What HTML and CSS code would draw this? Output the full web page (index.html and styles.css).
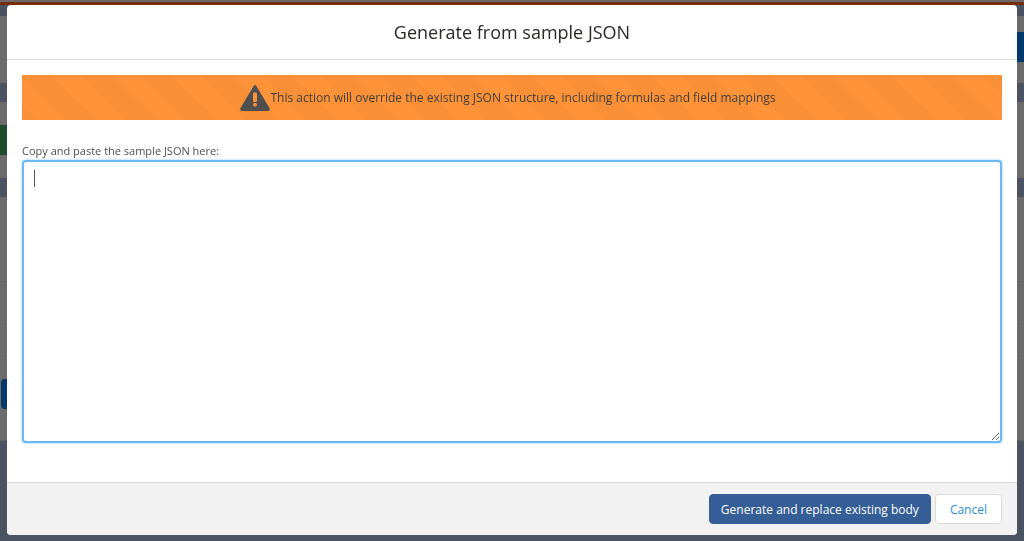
FILE: index.html
```
<!DOCTYPE html>
<html lang="en">
<head>
    <meta charset="utf-8">
    <title>Generate from sample JSON</title>
    <link rel="stylesheet" href="styles.css">
</head>
<body>
    <div class="page">
        <div class="page-top"></div>
        <div class="card card-header"><span class="block block-blue"></span></div>
        <div class="card card-actions"><span class="block block-green"></span></div>
        <div class="card card-fields">
            <div class="row"></div>
            <div class="row"></div>
            <div class="row"></div>
            <div class="row row-button"><span class="block block-blue"></span></div>
        </div>
    </div>

    <div class="backdrop">
        <div class="modal" role="dialog" aria-labelledby="modalTitle">
            <div class="modal-header">
                <h2 id="modalTitle">Generate from sample JSON</h2>
            </div>

            <div class="modal-content">
                <div class="alert">
                    <svg class="alert-icon" viewBox="0 0 30 26" aria-hidden="true">
                        <path fill="#514f4d" fill-rule="evenodd" d="M13.6 1Q15 -1 16.4 1L29.6 23.2Q30.6 26 28 26H2Q-.6 26 .4 23.2ZM14 7.5Q13 7.5 13 8.5V16Q13 17 14 17H16Q17 17 17 16V8.5Q17 7.5 16 7.5ZM15 17.8A2 2 0 1 0 15 21.8A2 2 0 1 0 15 17.8Z"/>
                    </svg>
                    <span>This action will override the existing JSON structure, including formulas and field mappings</span>
                </div>
                <label for="sampleJson">Copy and paste the sample JSON here:</label>
                <textarea id="sampleJson"></textarea>
            </div>

            <div class="modal-footer">
                <button class="btn btn-brand" type="button">Generate and replace existing body</button>
                <button class="btn" type="button">Cancel</button>
            </div>
        </div>
    </div>
</body>
</html>
```

FILE: styles.css
```
* {
    box-sizing: border-box;
}

body {
    margin: 0;
    font-family: "Open Sans", "Noto Sans", sans-serif;
    font-size: 12px;
    color: #3e3e3c;
    background-color: #4b5262;
}

/* page behind the modal */
.page {
    height: 100vh;
    overflow: hidden;
}

.page-top {
    height: 5px;
    margin-bottom: 11px;
    background-color: #6c6a69;
    border-bottom: 3px solid #752e0c;
}

.card {
    display: flex;
    margin-bottom: 19px;
    background-color: #6b6b6b;
}

.card-header {
    justify-content: flex-end;
    padding: 16px 0 21px;
}

.card-actions {
    padding: 23px 0;
}

.card-fields {
    flex-direction: column;
    padding-top: 46px;
}

.row {
    height: 39px;
    border-bottom: 1px solid #646464;
}

.row-button {
    height: 81px;
    padding: 19px 1px;
}

.block {
    display: block;
    width: 100px;
    height: 30px;
}

.block-blue {
    background-color: #03396a;
    border-radius: 4px;
}

.card-header .block-blue {
    border-radius: 0;
}

.block-green {
    background-color: #1d4a29;
}

/* modal */
.backdrop {
    position: fixed;
    inset: 0;
    display: flex;
    padding: 5px 7px 6px;
}

.modal {
    display: flex;
    flex-direction: column;
    flex: 1;
    background-color: #fff;
    border-radius: 4px;
    overflow: hidden;
}

.modal-header {
    padding: 14px 15px;
    text-align: center;
    border-bottom: 1px solid #dddbda;
}

.modal-header h2 {
    margin: 0;
    font-size: 18px;
    font-weight: 400;
    line-height: 26px;
    color: #2b2826;
}

.modal-content {
    display: flex;
    flex-direction: column;
    flex: 1;
    padding: 15px 15px 39px;
}

.alert {
    display: flex;
    align-items: center;
    justify-content: center;
    height: 45px;
    margin-bottom: 22px;
    padding-right: 8px;
    background-color: #ff9339;
    background-image: linear-gradient(45deg, rgba(0, 0, 0, 0.025) 25%, transparent 25%, transparent 50%, rgba(0, 0, 0, 0.025) 50%, rgba(0, 0, 0, 0.025) 75%, transparent 75%);
    background-size: 60px 60px;
}

.alert-icon {
    width: 30px;
    height: 26px;
}

label {
    font-size: 11px;
    line-height: 18px;
    color: #514f4d;
}

textarea {
    display: block;
    flex: 1;
    width: 100%;
    padding: 8px 12px;
    font: inherit;
    caret-color: transparent;
    /* text cursor */
    background: #fff linear-gradient(#555, #555) 10px 8px / 1px 17px no-repeat;
    border: 2px solid #6bb8fa;
    border-radius: 4px;
    outline: none;
    box-shadow: 0 0 2px #6bb8fa;
    resize: vertical;
}

.modal-footer {
    display: flex;
    justify-content: flex-end;
    gap: 4px;
    padding: 11px 15px;
    background-color: #f3f2f2;
    border-top: 1px solid #dddbda;
}

.btn {
    height: 30px;
    padding: 0 14px;
    font-family: inherit;
    font-size: 12px;
    color: #2b8ede;
    background-color: #fff;
    border: 1px solid #dddbda;
    border-radius: 4px;
    cursor: pointer;
}

.btn-brand {
    padding: 0 11px;
    color: #fff;
    background-color: #355d96;
    border-color: #355d96;
}
```
